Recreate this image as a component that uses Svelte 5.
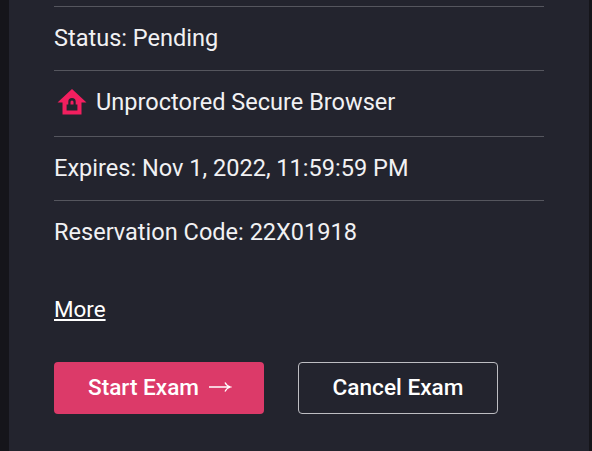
<script>
  const rows = [
    { id: "status", label: "Status: Pending" },
    { id: "proctor", label: "Unproctored Secure Browser", icon: true },
    { id: "expires", label: "Expires: Nov 1, 2022, 11:59:59 PM" },
    { id: "code", label: "Reservation Code: 22X01918" }
  ];
</script>

<div class="page">
  <main class="panel">
    <ul class="details">
      {#each rows as row (row.id)}
        <li class:with-icon={row.icon}>
          {#if row.icon}
            <svg width="30" height="26" viewBox="0 0 30 26" aria-hidden="true">
              <path
                fill="#f21f5f"
                fill-rule="evenodd"
                d="M15 0 L29.5 13.5 L24.5 13.5 L24.5 25.5 L5.5 25.5 L5.5 13.5 L.5 13.5 Z M15 9 a3.7 3.7 0 0 0-3.7 3.7 V15.5 H9.6 V21.5 H20.4 V15.5 H18.7 V12.7 A3.7 3.7 0 0 0 15 9 Z M15 11.6 a1.5 1.5 0 0 1 1.5 1.5 V15.5 H13.5 V13.1 A1.5 1.5 0 0 1 15 11.6 Z"
              />
            </svg>
          {/if}
          <span>{row.label}</span>
        </li>
      {/each}
    </ul>

    <a class="more" href="#more">More</a>

    <div class="actions">
      <button class="start">
        Start Exam
        <svg width="24" height="12" viewBox="0 0 24 12" aria-hidden="true">
          <path d="M1 6 H22 M17 1.5 Q18.5 4.8 22.5 6 Q18.5 7.2 17 10.5" fill="none" stroke="#fff" stroke-width="1.3" />
        </svg>
      </button>
      <button class="cancel">Cancel Exam</button>
    </div>
  </main>
</div>

<style>
  :global(body) {
    margin: 0;
    background: #15151a;
  }
  .page {
    height: 451px;
    overflow: hidden;
    padding: 0 3px 0 9px;
    font-family: Roboto, "Liberation Sans", sans-serif;
  }
  .panel {
    height: 100%;
    box-sizing: border-box;
    padding: 6px 45px 0;
    background: #23242e;
    color: #f1f1f3;
  }
  .details {
    list-style: none;
    margin: 0;
    padding: 0;
  }
  li {
    display: flex;
    align-items: center;
    height: 64px;
    padding-bottom: 2px;
    box-sizing: border-box;
    border-top: 1px solid #55565e;
    font-size: 23.55px;
  }
  li.with-icon {
    height: 66px;
    gap: 9px;
    padding-left: 3px;
    padding-bottom: 4px;
  }
  .more {
    display: block;
    width: max-content;
    margin-top: 32px;
    color: #fff;
    font-size: 22.4px;
    line-height: 26px;
    text-decoration: underline;
  }
  .actions {
    display: flex;
    gap: 34px;
    margin-top: 40px;
  }
  button {
    height: 52px;
    padding: 0 0 2px;
    border-radius: 4px;
    color: #fff;
    font-family: inherit;
    font-size: 22.6px;
    font-weight: 500;
    cursor: pointer;
  }
  .start {
    display: flex;
    align-items: center;
    justify-content: center;
    gap: 9px;
    width: 210px;
    padding-left: 2px;
    border: 0;
    background: #dc3a69;
  }
  .cancel {
    width: 200px;
    border: 1px solid #bdbdc2;
    background: transparent;
  }
</style>
